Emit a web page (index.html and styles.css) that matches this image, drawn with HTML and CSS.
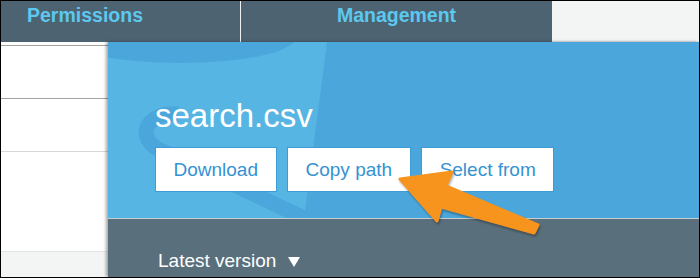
FILE: index.html
```html
<!DOCTYPE html>
<html lang="en">
<head>
    <meta charset="UTF-8">
    <meta name="viewport" content="width=device-width, initial-scale=1.0">
    <title>search.csv - Object</title>
    <link rel="stylesheet" href="styles.css">
</head>
<body>
    <div class="frame">
        <!-- Top tabs -->
        <header class="tabs">
            <div class="tab tab-first">Permissions</div>
            <div class="tab">Management</div>
            <div class="tabs-rest"></div>
        </header>

        <div class="main">
            <!-- List rows behind the panel -->
            <div class="side">
                <div class="side-row"></div>
                <div class="side-row"></div>
                <div class="side-row side-row-light"></div>
                <div class="side-foot"></div>
            </div>

            <!-- Object panel -->
            <div class="panel">
                <div class="hero">
                    <svg class="bucket" viewBox="0 0 591 176" width="591" height="176">
                        <polygon points="-10,0 219,0 196,176 -10,176" fill="#56b5e3"/>
                        <ellipse cx="72" cy="-4" rx="115" ry="25" fill="#4ba7db"/>
                        <path d="M 70 72 C 40 70, 28 92, 48 106 L 196 176" fill="none" stroke="#4ba7db" stroke-width="15"/>
                    </svg>
                    <h2 class="hero-title">search.csv</h2>
                    <div class="actions">
                        <button class="action">Download</button>
                        <button class="action">Copy path</button>
                        <button class="action">Select from</button>
                    </div>
                </div>
                <div class="versions">
                    <span class="version-pick">Latest version<span class="caret"></span></span>
                </div>
            </div>
        </div>

        <!-- Callout arrow -->
        <svg class="arrow" viewBox="0 0 700 278" width="700" height="278">
            <polygon points="400,179 452,172 446,186 538,225 534,233 441,207 437,221" fill="#f7941d" stroke="#f7941d" stroke-width="3" stroke-linejoin="round"/>
        </svg>
    </div>
</body>
</html>
```

FILE: styles.css
```css
body { margin: 0; font-family: "Liberation Sans", Arial, sans-serif; background: #fff; }
.frame { position: relative; width: 700px; height: 278px; box-sizing: border-box; border: 1px solid #000; overflow: hidden; display: flex; flex-direction: column; }

.tabs { display: flex; height: 41px; flex-shrink: 0; background: #4e6371; }
.tab { width: 311px; flex-shrink: 0; box-sizing: border-box; padding-top: 2px; text-align: center; font-size: 19.5px; line-height: 24px; font-weight: bold; color: #5cc8ef; }
.tab-first { margin-left: -71px; border-right: 1px solid #eef1f2; }
.tabs-rest { flex: 1; background: #f3f5f5; border-bottom: 1px solid #e2e5e5; }

.main { flex: 1; display: flex; }
.side { width: 107px; flex-shrink: 0; display: flex; flex-direction: column; padding-top: 3px; background: #fff; }
.side-row { height: 52px; border-top: 1px solid #a3a3a3; }
.side-row-light { height: 99px; border-top-color: #d8d8d8; }
.side-foot { flex: 1; background: #f3f4f4; border-top: 1px solid #e4e6e6; }

.panel { flex: 1; display: flex; flex-direction: column; box-shadow: -2px 0 3px rgba(0, 0, 0, 0.35); position: relative; }
.hero { position: relative; height: 176px; padding: 56px 0 0 47px; box-sizing: border-box; background: #4ba7db; overflow: hidden; }
.bucket { position: absolute; left: 0; top: 0; }
.hero-title { position: relative; margin: 0; font-size: 33px; line-height: 36px; font-weight: normal; color: #fff; }
.actions { position: relative; display: flex; gap: 10.5px; margin-top: 13px; }
.action { height: 45px; padding: 0 17.5px; background: #fff; border: 1px solid #3f9bd6; border-radius: 0; font-family: inherit; font-size: 19px; line-height: 43px; color: #3592d2; cursor: pointer; }

.versions { flex: 1; background: #5a6f7c; border-top: 1px solid #c6cfd4; padding: 30px 0 0 50px; }
.version-pick { font-size: 19px; line-height: 24px; color: #fff; }
.caret { display: inline-block; width: 0; height: 0; margin-left: 12px; border-left: 6.5px solid transparent; border-right: 6.5px solid transparent; border-top: 10px solid #fff; }

.arrow { position: absolute; left: -1px; top: -1px; pointer-events: none; }
.arrow polygon { filter: drop-shadow(1px 2px 1px rgba(0, 0, 0, 0.3)); }
```
